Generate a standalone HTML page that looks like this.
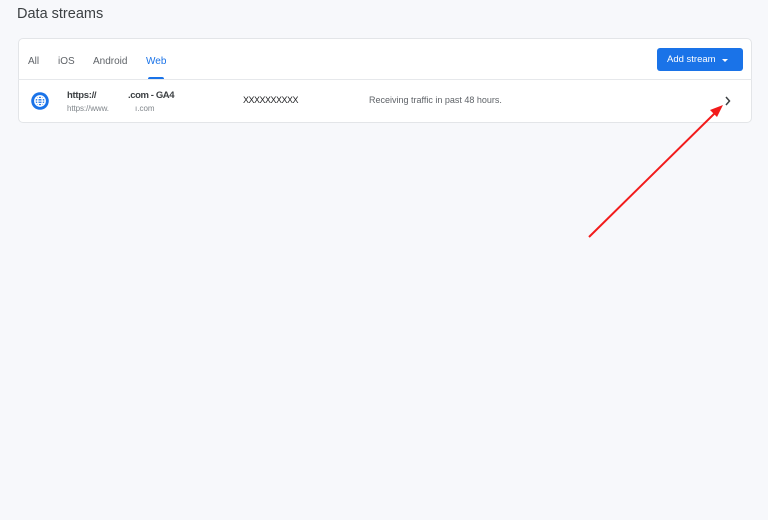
<!DOCTYPE html>
<html><head><meta charset="utf-8"><style>
*{margin:0;padding:0;box-sizing:border-box}
body{width:768px;height:520px;background:#f7f8fb;font-family:"Liberation Sans",sans-serif;position:relative;overflow:hidden;color:#202124}
.t{position:absolute;white-space:nowrap}
</style></head><body>
<div class="t" style="left:17px;top:6px;font-size:14.5px;color:#3c4043">Data streams</div>
<div class="t" style="left:18px;top:38px;width:734px;height:85px;background:#fff;border:1px solid #e3e5e8;border-radius:5px"></div>
<div class="t" style="left:18px;top:79px;width:734px;height:1px;background:#e6e8eb"></div>
<div class="t" style="left:28px;top:56px;font-size:10px;color:#5f6368">All</div>
<div class="t" style="left:58px;top:56px;font-size:10px;color:#5f6368">iOS</div>
<div class="t" style="left:93px;top:56px;font-size:10px;color:#5f6368">Android</div>
<div class="t" style="left:146px;top:56px;font-size:10px;color:#1a73e8">Web</div>
<div class="t" style="left:148px;top:77px;width:16px;height:2px;background:#1a73e8;border-radius:2px 2px 0 0"></div>
<div class="t" style="left:657px;top:48px;width:86px;height:23px;background:#1a73e8;border-radius:3px;color:#fff;font-size:9.5px;line-height:23px;padding-left:10px">Add stream</div>
<div class="t" style="left:722px;top:59px;border-left:3px solid transparent;border-right:3px solid transparent;border-top:3px solid #fff"></div>
<svg class="t" style="left:31px;top:92px" width="18" height="18" viewBox="0 0 16 16"><circle cx="8" cy="8" r="7.8" fill="#1a73e8"/><circle cx="8" cy="8" r="4.6" fill="none" stroke="#fff" stroke-width="1.3"/><ellipse cx="8" cy="8" rx="2" ry="4.6" fill="none" stroke="#fff" stroke-width="1.1"/><path d="M3.4 8h9.2M4.2 5.8h7.6M4.2 10.2h7.6" stroke="#fff" stroke-width="1"/></svg>
<div class="t" style="left:67px;top:90px;font-size:9.5px;font-weight:bold;color:#3c4043;letter-spacing:-0.3px">https://</div>
<div class="t" style="left:128px;top:90px;font-size:9.5px;font-weight:bold;color:#3c4043;letter-spacing:-0.4px">.com - GA4</div>
<div class="t" style="left:67px;top:104px;font-size:8px;color:#80868b;letter-spacing:-0.1px">https://www.</div>
<div class="t" style="left:135px;top:104px;font-size:8px;color:#80868b">ı.com</div>
<div class="t" style="left:243px;top:95px;font-size:9px;color:#202124;letter-spacing:-0.5px">XXXXXXXXXX</div>
<div class="t" style="left:369px;top:95px;font-size:9px;color:#5f6368">Receiving traffic in past 48 hours.</div>
<svg class="t" style="left:0;top:0" width="768" height="520"><path d="M726 97l3.5 4-3.5 4" fill="none" stroke="#3c4043" stroke-width="1.5"/><path d="M589 237L716 112" stroke="#f21b1b" stroke-width="2"/><path d="M723 105L710 110L717 117Z" fill="#f21b1b"/></svg>
</body></html>
